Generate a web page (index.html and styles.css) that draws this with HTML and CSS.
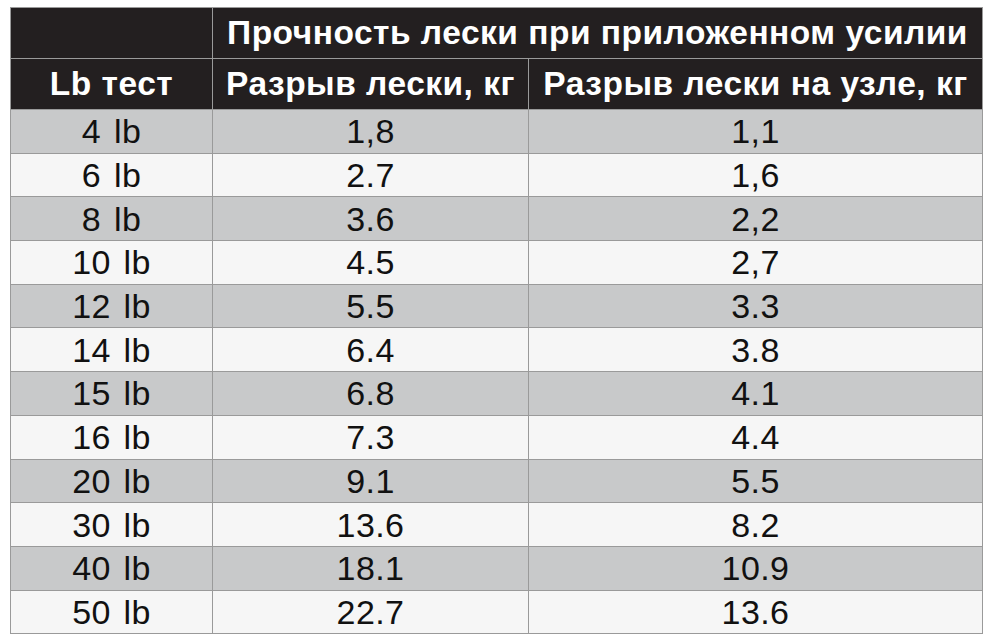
FILE: index.html
```html
<!DOCTYPE html>
<html lang="ru">
<head>
<meta charset="utf-8">
<title>Прочность лески</title>
<link rel="stylesheet" href="styles.css">
</head>
<body>
<table class="chart">
  <colgroup>
    <col class="c1">
    <col class="c2">
    <col class="c3">
  </colgroup>
  <thead>
    <tr class="h1">
      <th></th>
      <th colspan="2">Прочность лески при приложенном усилии</th>
    </tr>
    <tr class="h2">
      <th>Lb тест</th>
      <th>Разрыв лески, кг</th>
      <th>Разрыв лески на узле, кг</th>
    </tr>
  </thead>
  <tbody>
    <tr><td>4 lb</td><td>1,8</td><td>1,1</td></tr>
    <tr><td>6 lb</td><td>2.7</td><td>1,6</td></tr>
    <tr><td>8 lb</td><td>3.6</td><td>2,2</td></tr>
    <tr><td>10 lb</td><td>4.5</td><td>2,7</td></tr>
    <tr><td>12 lb</td><td>5.5</td><td>3.3</td></tr>
    <tr><td>14 lb</td><td>6.4</td><td>3.8</td></tr>
    <tr><td>15 lb</td><td>6.8</td><td>4.1</td></tr>
    <tr><td>16 lb</td><td>7.3</td><td>4.4</td></tr>
    <tr><td>20 lb</td><td>9.1</td><td>5.5</td></tr>
    <tr><td>30 lb</td><td>13.6</td><td>8.2</td></tr>
    <tr><td>40 lb</td><td>18.1</td><td>10.9</td></tr>
    <tr><td>50 lb</td><td>22.7</td><td>13.6</td></tr>
  </tbody>
</table>
</body>
</html>
```
FILE: styles.css
```css
html, body {
  margin: 0;
  padding: 0;
  background: #ffffff;
}
body {
  padding: 7px 0 0 10px;
}
.chart {
  border-collapse: collapse;
  table-layout: fixed;
  width: 972px;
  font-family: "Liberation Sans", Arial, sans-serif;
}
.c1 { width: 202px; }
.c2 { width: 316px; }
.c3 { width: 454px; }
.chart th,
.chart td {
  border: 1px solid #9a9a9a;
  padding: 0;
  text-align: center;
  vertical-align: middle;
  white-space: nowrap;
  overflow: hidden;
}
.chart th {
  background: #231f20;
  color: #ffffff;
  font-family: "Liberation Sans Narrow", "Liberation Sans", Arial, sans-serif;
  font-weight: bold;
  font-size: 33.5px;
  letter-spacing: 0.5px;
}
.h1 th { height: 50px; }
.h2 th { height: 50px; }
.chart td {
  height: 42.7px;
  font-size: 34px;
  color: #111111;
  letter-spacing: 0.4px;
  word-spacing: 3px;
  line-height: 1;
}
.chart tbody tr:nth-child(odd) td { background: #c8c9ca; }
.chart tbody tr:nth-child(even) td { background: #f6f6f6; }
```
